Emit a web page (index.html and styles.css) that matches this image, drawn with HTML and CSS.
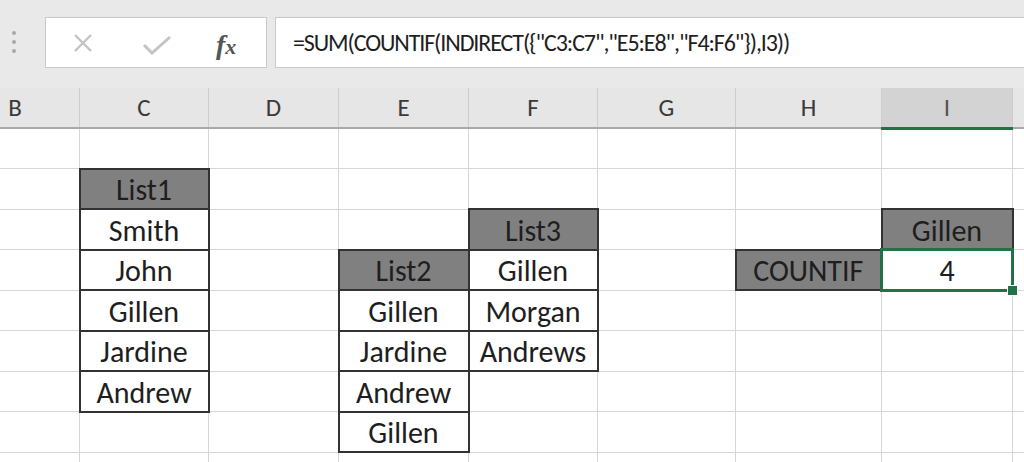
FILE: index.html
```html
<!DOCTYPE html>
<html lang="en">
<head>
    <meta charset="UTF-8">
    <title>COUNTIF with INDIRECT</title>
    <link rel="stylesheet" href="styles.css">
</head>
<body>

    <!-- Formula bar -->
    <div class="toolbar">
        <div class="grip">
            <span></span><span></span><span></span>
        </div>
        <div class="namebox">
            <svg class="icon icon-cancel" width="22" height="20" viewBox="0 0 22 20">
                <path d="M3 2 L19 18 M19 2 L3 18" stroke="#c4c4c4" stroke-width="2.4" fill="none"/>
            </svg>
            <svg class="icon icon-enter" width="30" height="20" viewBox="0 0 30 20">
                <path d="M2 10 L10 18 L28 2" stroke="#c4c4c4" stroke-width="3" fill="none"/>
            </svg>
            <span class="fx">f<span class="fx-x">x</span></span>
        </div>
        <div class="formula">=SUM(COUNTIF(INDIRECT({"C3:C7","E5:E8","F4:F6"}),I3))</div>
    </div>

    <!-- Sheet -->
    <div class="sheet">
        <table class="grid">
            <colgroup>
                <col class="col-b">
                <col class="col-c">
                <col class="col-d">
                <col class="col-e">
                <col class="col-f">
                <col class="col-g">
                <col class="col-h">
                <col class="col-i">
                <col class="col-j">
            </colgroup>
            <tr class="heads">
                <th>B</th><th>C</th><th>D</th><th>E</th><th>F</th><th>G</th><th>H</th><th class="active">I</th><th></th>
            </tr>
            <tr>
                <td></td><td></td><td></td><td></td><td></td><td></td><td></td><td></td><td></td>
            </tr>
            <tr>
                <td></td><td class="box dark">List1</td><td></td><td></td><td></td><td></td><td></td><td></td><td></td>
            </tr>
            <tr>
                <td></td><td class="box">Smith</td><td></td><td></td><td class="box dark">List3</td><td></td><td></td><td class="box dark">Gillen</td><td></td>
            </tr>
            <tr>
                <td></td><td class="box">John</td><td></td><td class="box dark">List2</td><td class="box">Gillen</td><td></td><td class="box dark">COUNTIF</td><td class="selected">4</td><td></td>
            </tr>
            <tr>
                <td></td><td class="box">Gillen</td><td></td><td class="box">Gillen</td><td class="box">Morgan</td><td></td><td></td><td></td><td></td>
            </tr>
            <tr>
                <td></td><td class="box">Jardine</td><td></td><td class="box">Jardine</td><td class="box">Andrews</td><td></td><td></td><td></td><td></td>
            </tr>
            <tr>
                <td></td><td class="box">Andrew</td><td></td><td class="box">Andrew</td><td></td><td></td><td></td><td></td><td></td>
            </tr>
            <tr>
                <td></td><td></td><td></td><td class="box">Gillen</td><td></td><td></td><td></td><td></td><td></td>
            </tr>
            <tr>
                <td></td><td></td><td></td><td></td><td></td><td></td><td></td><td></td><td></td>
            </tr>
        </table>
    </div>

</body>
</html>
```

FILE: styles.css
```css
/* Basic reset */
* {
    margin: 0;
    padding: 0;
    box-sizing: border-box;
}

body {
    width: 1024px;
    height: 462px;
    overflow: hidden;
    background: #fff;
    font-family: Carlito, Lato, "Open Sans", sans-serif;
    color: #1e1e1e;
}

/* Formula bar */
.toolbar {
    display: flex;
    align-items: flex-start;
    height: 88px;
    padding-top: 17px;
    background-color: #e9e9e9;
}

.grip {
    display: flex;
    flex-direction: column;
    align-items: center;
    gap: 5px;
    width: 28px;
    margin-right: 17px;
    padding-top: 14px;
}

.grip span {
    width: 4px;
    height: 4px;
    border-radius: 50%;
    background-color: #a8a8a8;
}

.namebox {
    display: flex;
    align-items: center;
    width: 222px;
    height: 51px;
    padding-left: 26px;
    background-color: #fff;
    border: 1px solid #c9c9c9;
}

.icon-cancel {
    margin-right: 48px;
}

.icon-enter {
    margin-top: 4px;
    margin-right: 44px;
}

.fx {
    margin-top: 4px;
    font-family: "Liberation Serif", serif;
    font-style: italic;
    font-weight: bold;
    font-size: 28px;
    color: #555;
    line-height: 1;
}

.fx-x {
    font-size: 22px;
}

.formula {
    flex: 1;
    height: 51px;
    margin-left: 8px;
    margin-right: -4px;
    padding-left: 17px;
    line-height: 49px;
    font-size: 24px;
    letter-spacing: -1.1px;
    color: #1e1e1e;
    white-space: nowrap;
    background-color: #fff;
    border: 1px solid #c9c9c9;
}

/* Sheet grid */
.sheet {
    height: 374px;
    overflow: hidden;
}

.grid {
    margin-left: -50px;
    border-collapse: collapse;
    table-layout: fixed;
    width: 1192px;
}

.col-b { width: 129px; }
.col-c { width: 129px; }
.col-d { width: 130px; }
.col-e { width: 130px; }
.col-f { width: 129px; }
.col-g { width: 138px; }
.col-h { width: 146px; }
.col-i { width: 131px; }
.col-j { width: 130px; }

.heads th {
    height: 40px;
    font-weight: normal;
    font-size: 25px;
    color: #3a3a3a;
    background-color: #e6e6e6;
    border-left: 1px solid #cdcdcd;
    border-right: 1px solid #cdcdcd;
    border-bottom: 2px solid #a9a9a9;
}

.heads th.active {
    color: #555;
    background-color: #d3d3d3;
    border-bottom: 3px solid #217346;
}

.grid td {
    height: 40.5px;
    padding-top: 3px;
    line-height: 30px;
    text-align: center;
    font-size: 30px;
    border: 1px solid #d6d6d6;
    white-space: nowrap;
}

.grid td.box {
    border: 2px solid #333;
}

.grid td.dark {
    background-color: #808080;
}

.grid td.selected {
    position: relative;
    border: 3px solid #217346;
}

/* Fill handle */
.grid td.selected::after {
    content: "";
    position: absolute;
    right: -7px;
    bottom: -7px;
    width: 9px;
    height: 9px;
    background-color: #217346;
    border: 1px solid #fff;
}
```
